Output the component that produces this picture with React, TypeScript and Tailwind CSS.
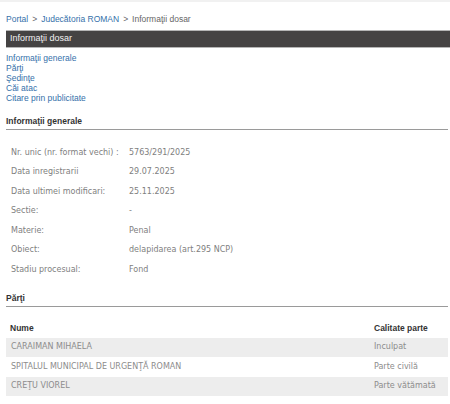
import React from "react";

const arial = { fontFamily: '"Liberation Sans", Arial, sans-serif' };
const verdana = { fontFamily: '"DejaVu Sans", Verdana, sans-serif' };

const details: [string, string][] = [
  ["Nr. unic (nr. format vechi) :", "5763/291/2025"],
  ["Data inregistrarii", "29.07.2025"],
  ["Data ultimei modificari:", "25.11.2025"],
  ["Sectie:", "-"],
  ["Materie:", "Penal"],
  ["Obiect:", "delapidarea (art.295 NCP)"],
  ["Stadiu procesual:", "Fond"],
];

const parties: [string, string][] = [
  ["CARAIMAN MIHAELA", "Inculpat"],
  ["SPITALUL MUNICIPAL DE URGENŢĂ ROMAN", "Parte civilă"],
  ["CREŢU VIOREL", "Parte vătămată"],
];

const links = ["Informaţii generale", "Părţi", "Şedinţe", "Căi atac", "Citare prin publicitate"];

export default function App() {
  return (
    <div className="w-[450px] h-[404px] overflow-hidden bg-white border-t-2 border-[#f1f1f1]">
      <div className="pl-[6px] pr-[2px]">
        {/* breadcrumb */}
        <div className="h-[28px] flex items-end pb-[6px] text-[8.5px] leading-[10px]" style={arial}>
          <span className="text-[#3470aa]">Portal</span>
          <span className="text-[#666] mx-[4px]">&gt;</span>
          <span className="text-[#3470aa]">Judecătoria ROMAN</span>
          <span className="text-[#666] mx-[4px]">&gt;</span>
          <span className="text-[#666]">Informaţii dosar</span>
        </div>

        {/* section bar */}
        <div className="-mr-[2px] border-y border-[#b5b5b5] bg-[#454343] h-[18px] flex items-center pl-[4px] text-[9px] text-[#f2f2f2]" style={arial}>
          Informaţii dosar
        </div>

        {/* in-page links */}
        <div className="pt-[5px] flex flex-col text-[8.5px] leading-[10px] text-[#3470aa]" style={arial}>
          {links.map((l) => (
            <span key={l}>{l}</span>
          ))}
        </div>

        {/* general info */}
        <div className="mt-[13px] border-b border-[#9a9a9a] pb-[3px] text-[8.5px] leading-[10px] font-bold text-[#333]" style={arial}>
          Informaţii generale
        </div>
        <div className="pt-[13px] text-[8px] leading-[10px] text-[#808080]" style={verdana}>
          {details.map(([k, v]) => (
            <div key={k} className="h-[19.5px] flex items-center pl-[5px]">
              <span className="w-[118px] shrink-0">{k}</span>
              <span>{v}</span>
            </div>
          ))}
        </div>

        {/* parties */}
        <div className="mt-[13px] border-b border-[#9a9a9a] pb-[3px] text-[8.5px] leading-[10px] font-bold text-[#333]" style={arial}>
          Părţi
        </div>
        <div className="pt-[12px]">
          <div className="h-[19px] flex items-center pl-[4px] text-[8.5px] font-bold text-[#333]" style={arial}>
            <span className="flex-1">Nume</span>
            <span className="w-[74px]">Calitate parte</span>
          </div>
          {parties.map(([n, c], i) => (
            <div
              key={n}
              className={`h-[19.5px] flex items-center pl-[5px] text-[8px] text-[#8c8c8c] ${i % 2 === 0 ? "bg-[#ededed]" : "bg-white"}`}
              style={verdana}
            >
              <span className="flex-1">{n}</span>
              <span className="w-[74px]">{c}</span>
            </div>
          ))}
        </div>
      </div>
    </div>
  );
}
